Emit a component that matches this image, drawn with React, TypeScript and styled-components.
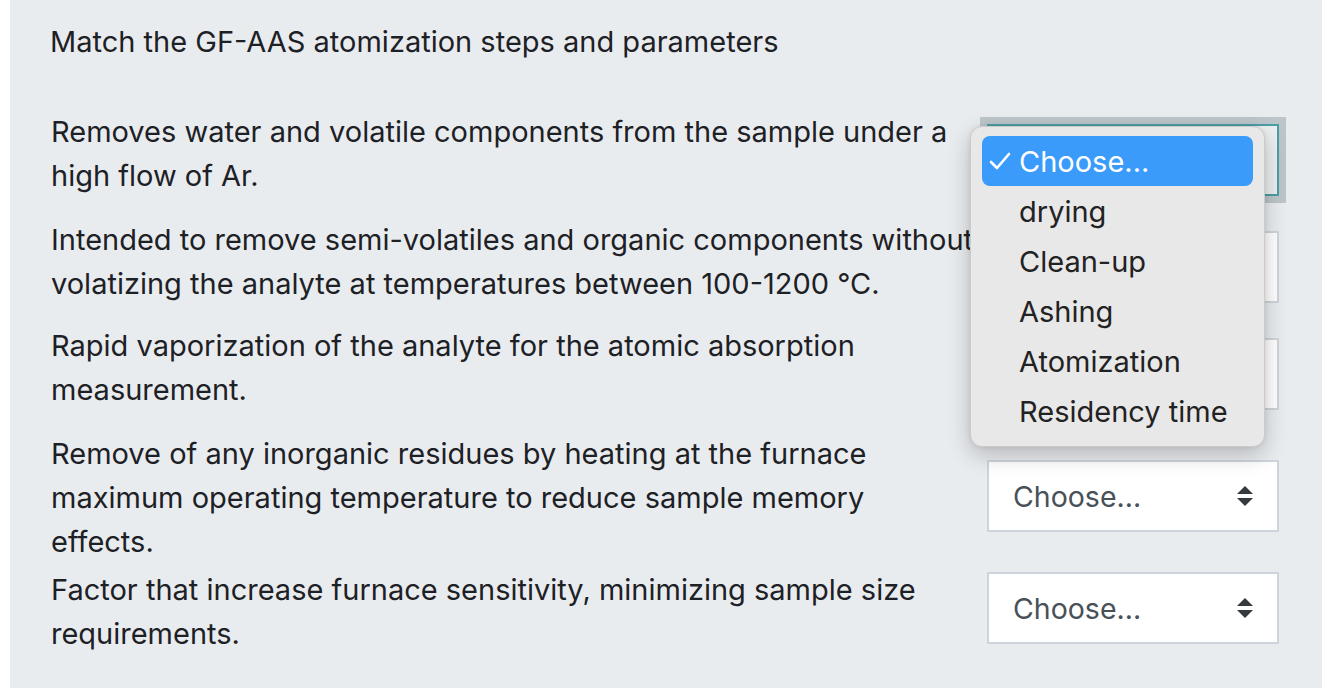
import React from "react";
import styled, { createGlobalStyle } from "styled-components";

const GlobalStyle = createGlobalStyle`
  html, body {
    margin: 0;
    padding: 0;
    background: #ffffff;
  }
  body {
    font-family: Inter, "Noto Sans", "Liberation Sans", sans-serif;
    color: #1d2125;
  }
`;

const Panel = styled.div`
  margin-left: 10px;
  width: 1312px;
  height: 688px;
  box-sizing: border-box;
  background: #e9ecef;
  padding: 20px 43px 0 40px;
`;

const Title = styled.div`
  font-size: 29px;
  line-height: 44px;
  margin-bottom: 46px;
`;

const Row = styled.div`
  display: grid;
  grid-template-columns: 1fr 292px;
  align-items: center;
`;

const Prompt = styled.div<{ $after: number }>`
  font-size: 29px;
  line-height: 44px;
  padding-left: 1px;
  margin-bottom: ${(p) => p.$after}px;
`;

const Line = styled.span`
  display: block;
  white-space: nowrap;
`;

const SelectCell = styled.div`
  position: relative;
  margin-bottom: 8px;
`;

const SelectBox = styled.div<{ $focused?: boolean }>`
  height: 72px;
  box-sizing: border-box;
  display: flex;
  align-items: center;
  justify-content: space-between;
  padding: 0 24px 0 24px;
  background: ${(p) => (p.$focused ? "#eceeef" : "#ffffff")};
  border: 2px solid ${(p) => (p.$focused ? "#4a9ea6" : "#ced4da")};
  box-shadow: ${(p) => (p.$focused ? "0 0 0 7px rgba(120, 140, 145, 0.4)" : "none")};
  color: #495057;
  font-size: 28.5px;
`;

const Menu = styled.div`
  position: absolute;
  left: -17px;
  top: 2px;
  width: 295px;
  box-sizing: border-box;
  padding: 9px 11px 10px;
  background: #e8e8e8;
  border: 1px solid #cbcbcb;
  border-radius: 12px;
  box-shadow: 0 8px 22px rgba(0, 0, 0, 0.22), 0 0 4px rgba(0, 0, 0, 0.08);
  z-index: 5;
`;

const MenuItem = styled.div<{ $selected?: boolean }>`
  height: 50px;
  display: flex;
  align-items: center;
  position: relative;
  padding-left: 37px;
  border-radius: 8px;
  font-size: 29px;
  color: ${(p) => (p.$selected ? "#ffffff" : "#222222")};
  background: ${(p) => (p.$selected ? "#3a9bfb" : "transparent")};
`;

const Check = styled.svg`
  position: absolute;
  left: 7px;
  top: 16px;
`;

const Arrows = () => (
  <svg width="16" height="20" viewBox="0 0 4 5">
    <path d="M2 0L0 2h4zm0 5L0 3h4z" fill="#343a40" />
  </svg>
);

const options = ["Choose...", "drying", "Clean-up", "Ashing", "Atomization", "Residency time"];

const rows: { lines: string[]; after: number }[] = [
  { lines: ["Removes water and volatile components from the sample under a", "high flow of Ar."], after: 20 },
  { lines: ["Intended to remove semi-volatiles and organic components without", "volatizing the analyte at temperatures between 100-1200 °C."], after: 18 },
  { lines: ["Rapid vaporization of the analyte for the atomic absorption", "measurement."], after: 20 },
  { lines: ["Remove of any inorganic residues by heating at the furnace", "maximum operating temperature to reduce sample memory", "effects."], after: 4 },
  { lines: ["Factor that increase furnace sensitivity, minimizing sample size", "requirements."], after: 0 },
];

export default function App() {
  return (
    <>
      <GlobalStyle />
      <Panel>
        <Title>Match the GF-AAS atomization steps and parameters</Title>
        {rows.map((row, i) => (
          <Row key={i}>
            <Prompt $after={row.after}>
              {row.lines.map((l, j) => (
                <Line key={j}>{l}</Line>
              ))}
            </Prompt>
            <SelectCell>
              <SelectBox $focused={i === 0}>
                <span>Choose...</span>
                <Arrows />
              </SelectBox>
              {i === 0 && (
                <Menu>
                  {options.map((o, k) => (
                    <MenuItem key={o} $selected={k === 0}>
                      {k === 0 && (
                        <Check width="22" height="18" viewBox="0 0 22 18">
                          <path d="M2 10 L8 16 L20 2" fill="none" stroke="#ffffff" strokeWidth="2.6" strokeLinecap="round" strokeLinejoin="round" />
                        </Check>
                      )}
                      {o}
                    </MenuItem>
                  ))}
                </Menu>
              )}
            </SelectCell>
          </Row>
        ))}
      </Panel>
    </>
  );
}
